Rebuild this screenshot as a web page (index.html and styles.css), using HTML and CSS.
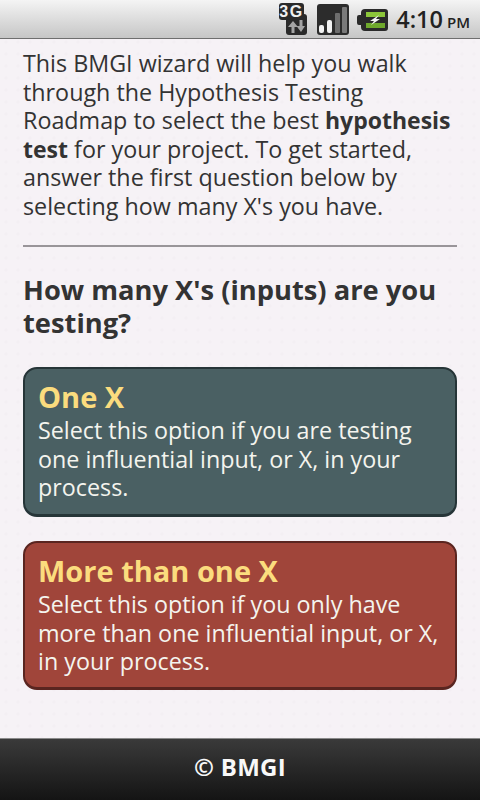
FILE: index.html
```html
<!DOCTYPE html>
<html lang="en">

<head>
    <meta charset="UTF-8">
    <meta name="viewport" content="width=device-width, initial-scale=1.0">
    <title>BMGI Hypothesis Testing Wizard</title>
    <link rel="stylesheet" href="styles.css">
</head>

<body>
    <div class="status-bar">
        <svg class="icon-3g" width="28" height="32" viewBox="0 0 28 32">
            <rect x="0" y="0" width="25" height="17" rx="3" fill="#2a2a2a"/>
            <rect x="7" y="11" width="21" height="21" rx="3" fill="#2a2a2a"/>
            <text class="icon-3g-label" x="12.500" y="14" text-anchor="middle">3G</text>
            <path d="M12.500 30v-6h-3.500l5-6 5 6h-3.500v6z" fill="#a4a4a4"/>
            <path d="M21.500 16v6h-3l4.500 6 4-6h-2.500v-6z" fill="#a4a4a4" transform="translate(-1 1)"/>
        </svg>
        <svg class="icon-signal" width="32" height="31" viewBox="0 0 32 31">
            <rect x="0" y="0" width="32" height="31" rx="3" fill="#2c2c2c"/>
            <rect x="2" y="21" width="5" height="8" rx="2" fill="#f2f2f2"/>
            <rect x="10" y="16" width="5" height="13" rx="2" fill="#f2f2f2"/>
            <rect x="18" y="9" width="5" height="20" rx="1" fill="#6e6e6e"/>
            <rect x="25" y="3" width="5" height="26" rx="1" fill="#7a7a7a"/>
        </svg>
        <svg class="icon-battery" width="31" height="22" viewBox="0 0 31 22">
            <path d="M8 0h20a3 3 0 0 1 3 3v16a3 3 0 0 1-3 3H8a4 4 0 0 1-4-4v-2H2a2 2 0 0 1-2-2V8a2 2 0 0 1 2-2h2V4a4 4 0 0 1 4-4z" fill="#2a2a2a"/>
            <rect x="9" y="3" width="19" height="5" fill="#8cc63a"/>
            <rect x="9" y="14" width="19" height="5" fill="#6fa92c"/>
            <path d="M22 6l-9 6h4l-3 4 9-6h-4l3-4z" fill="#f4f4f4"/>
        </svg>
        <span class="clock">4:10<small>PM</small></span>
    </div>

    <main class="content">
        <p class="intro">This BMGI wizard will help you walk through the Hypothesis Testing Roadmap to select the best <b>hypothesis test</b> for your project. To get started, answer the first question below by selecting how many X's you have.</p>
        <hr class="divider">
        <h2 class="question">How many X's (inputs) are you testing?</h2>

        <div class="option option-teal">
            <h3>One X</h3>
            <p>Select this option if you are testing one influential input, or X, in your process.</p>
        </div>
        <div class="option option-red">
            <h3>More than one X</h3>
            <p>Select this option if you only have more than one influential input, or X, in your process.</p>
        </div>
    </main>

    <footer class="footer">© BMGI</footer>
</body>

</html>
```

FILE: styles.css
```css
html, body {
    margin: 0;
    padding: 0;
}

body {
    width: 480px;
    height: 800px;
    overflow: hidden;
    display: flex;
    flex-direction: column;
    font-family: "Open Sans", "Noto Sans", sans-serif;
    background-color: #f6f2f6;
    background-image: radial-gradient(circle, #f3eff3 1px, transparent 2px);
    background-size: 12px 12px;
    color: #333333;
}

.status-bar {
    height: 38px;
    flex-shrink: 0;
    display: flex;
    align-items: center;
    justify-content: flex-end;
    padding-right: 10px;
    background: linear-gradient(#f4f4f4, #c6c6c6);
    border-bottom: 1px solid #6f6f6f;
    color: #222222;
}

.icon-3g {
    margin: 0 10px 1px 0;
}

.icon-3g-label {
    font-family: "Liberation Sans", sans-serif;
    font-size: 16px;
    font-weight: 700;
    letter-spacing: 1.500px;
    fill: #f0f0f0;
}

.icon-signal {
    margin: 0 8px 0 0;
}

.icon-battery {
    margin: 2px 8px 0 0;
}

.clock {
    font-size: 23.500px;
    font-weight: 600;
}

.clock small {
    font-size: 15px;
    margin-left: 4px;
}

.content {
    flex: 1;
    padding: 10px 23px 0;
}

.intro {
    margin: 0;
    font-size: 23.300px;
    line-height: 28.500px;
}

.intro b {
    font-size: 23px;
}

.divider {
    margin: 25px 0 0;
    border: none;
    height: 2px;
    background-color: #999599;
}

.question {
    margin: 26px 0 28px;
    font-size: 27.300px;
    line-height: 33px;
    font-weight: 700;
}

.option {
    box-sizing: border-box;
    height: 150px;
    margin-bottom: 24px;
    padding: 11px 13px 0;
    border-style: solid;
    border-width: 2px 2px 3px;
    border-radius: 14px;
    color: #f4f4ee;
}

.option h3 {
    margin: 0 0 2px;
    font-size: 29px;
    line-height: 34px;
    font-weight: 700;
    color: #fbdc7e;
}

.option p {
    margin: 0;
    font-size: 23.300px;
    line-height: 28.500px;
}

.option-teal {
    background-color: #4a6063;
    border-color: #263538;
}

.option-red {
    height: 149px;
    background-color: #a0453a;
    border-color: #5a2520;
}

.footer {
    height: 62px;
    flex-shrink: 0;
    box-sizing: border-box;
    border-top: 1px solid #8a8a8a;
    background: linear-gradient(#3a3a3a, #141414);
    color: #f8f8f8;
    font-size: 24px;
    font-weight: 700;
    letter-spacing: 0.300px;
    line-height: 56px;
    text-align: center;
}
```
